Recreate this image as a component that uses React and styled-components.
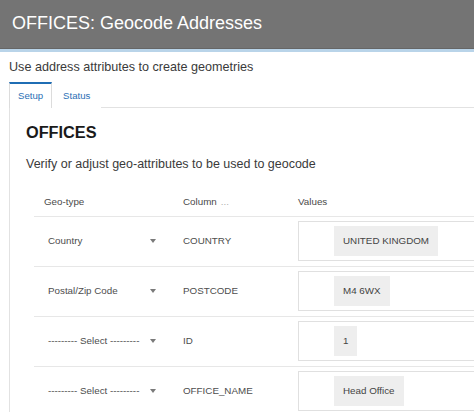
import React from "react";
import styled, { createGlobalStyle } from "styled-components";

const Global = createGlobalStyle`
  html, body {
    margin: 0;
    padding: 0;
    overflow: hidden;
    background: #ffffff;
    font-family: "Liberation Sans", Arial, sans-serif;
  }
  * { box-sizing: border-box; }
`;

const Header = styled.header`
  height: 52px;
  padding: 13px 12px 0;
  background: #747474;
  border-bottom: 3px solid #b9d4e9;
  box-shadow: inset 0 -1px 0 #666666;
  color: #ffffff;
  font-size: 18px;
  line-height: 20px;
  white-space: nowrap;
`;

const Sub = styled.div`
  height: 30px;
  padding-left: 9px;
  font-size: 12.6px;
  line-height: 30px;
  color: #3a3a3a;
  white-space: nowrap;
`;

const TabBar = styled.div`
  display: flex;
  margin-left: 9px;
  height: 26px;
  border-bottom: 1px solid #e2e2e2;
`;

const Tab = styled.div`
  height: 26px;
  margin-bottom: -1px;
  padding: 0 ${(p) => (p.$active ? "8px" : "10px")};
  border-top: 2px solid ${(p) => (p.$active ? "#1f6db4" : "transparent")};
  border-left: 1px solid ${(p) => (p.$active ? "#dcdcdc" : "transparent")};
  border-right: 1px solid ${(p) => (p.$active ? "#dcdcdc" : "transparent")};
  background: #ffffff;
  color: #2a6fb5;
  font-size: 9.6px;
  line-height: 23px;
`;

const Panel = styled.section`
  margin-left: 9px;
  min-height: 320px;
  border-left: 1px solid #e2e2e2;
  padding-left: 16px;
`;

const Title = styled.h1`
  margin: 0;
  padding-top: 14px;
  font-size: 16.3px;
  line-height: 20px;
  font-weight: bold;
  color: #1a1a1a;
`;

const Desc = styled.p`
  margin: 14px 0 0;
  font-size: 12.5px;
  line-height: 16px;
  color: #3a3a3a;
  white-space: nowrap;
`;

const Table = styled.div`
  margin-left: 8px;
`;

const Row = styled.div`
  display: grid;
  grid-template-columns: 149px 115px 1fr;
  align-items: center;
  border-bottom: 1px solid #e7e7e7;
  padding: ${(p) => (p.$head ? "24px 0 8px" : "4px 0 5px")};
  font-size: 9.8px;
  line-height: 12px;
  color: ${(p) => (p.$head ? "#4a4a4a" : "#4d4d4d")};
  white-space: nowrap;
`;

const HeadCell = styled.div`
  padding-left: ${(p) => p.$pad || 0}px;
`;

const Faint = styled.span`
  color: #b0b0b0;
  margin-left: 4px;
`;

const SelectCell = styled.div`
  display: flex;
  align-items: center;
  justify-content: space-between;
  padding-left: 14px;
  padding-right: 27px;
`;

const ColCell = styled.div``;

const ValueBox = styled.div`
  height: 40px;
  border: 1px solid #e0e0e0;
  border-right: none;
  padding-left: 35px;
  display: flex;
  align-items: center;
`;

const Chip = styled.div`
  height: 30px;
  padding: 0 9px;
  background: #eeeeee;
  display: flex;
  align-items: center;
  color: #444444;
`;

const Arrow = () => (
  <svg width="6" height="4" viewBox="0 0 6 4">
    <polygon points="0,0 6,0 3,4" fill="#7a7a7a" />
  </svg>
);

const rows = [
  { geo: "Country", col: "COUNTRY", val: "UNITED KINGDOM" },
  { geo: "Postal/Zip Code", col: "POSTCODE", val: "M4 6WX" },
  { geo: "--------- Select ---------", col: "ID", val: "1" },
  { geo: "--------- Select ---------", col: "OFFICE_NAME", val: "Head Office" },
];

export default function App() {
  return (
    <>
      <Global />
      <Header>OFFICES: Geocode Addresses</Header>
      <Sub>Use address attributes to create geometries</Sub>
      <TabBar>
        <Tab $active>Setup</Tab>
        <Tab>Status</Tab>
      </TabBar>
      <Panel>
        <Title>OFFICES</Title>
        <Desc>Verify or adjust geo-attributes to be used to geocode</Desc>
        <Table>
          <Row $head>
            <HeadCell $pad={10}>Geo-type</HeadCell>
            <HeadCell>
              Column<Faint>...</Faint>
            </HeadCell>
            <HeadCell>Values</HeadCell>
          </Row>
          {rows.map((r, i) => (
            <Row key={i}>
              <SelectCell>
                <span>{r.geo}</span>
                <Arrow />
              </SelectCell>
              <ColCell>{r.col}</ColCell>
              <ValueBox>
                <Chip>{r.val}</Chip>
              </ValueBox>
            </Row>
          ))}
        </Table>
      </Panel>
    </>
  );
}
